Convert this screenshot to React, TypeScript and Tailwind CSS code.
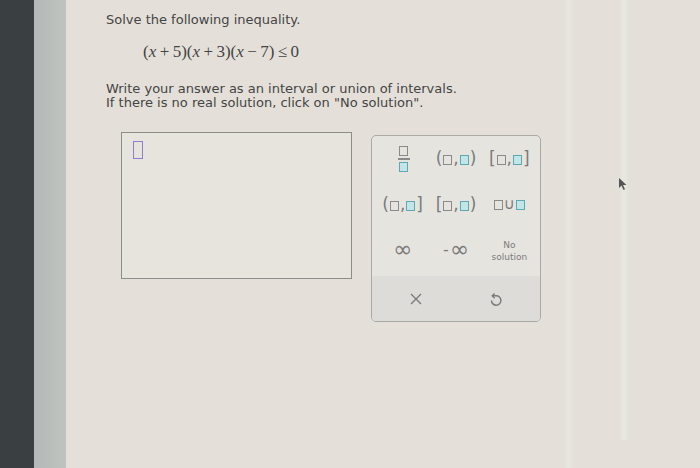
import React from 'react';

const Box = ({ filled }: { filled?: boolean }) => (
  <span
    className={
      filled
        ? 'inline-block w-[9px] h-[10px] border-[1.5px] border-[#5ea8b1] bg-[#c2e5e8]'
        : 'inline-block w-[9px] h-[10px] border-[1.5px] border-[#8a8a8a]'
    }
  />
);

const Interval = ({ open, close }: { open: string; close: string }) => (
  <span className="flex items-center text-[17px] leading-none text-[#7b7b7b]">
    <span className="pb-[2px]">{open}</span>
    <span className="mx-[1px]"><Box /></span>
    <span className="pb-[2px]">,</span>
    <span className="mx-[1px]"><Box filled /></span>
    <span className="pb-[2px]">{close}</span>
  </span>
);

const Key: React.FC<{ children: React.ReactNode }> = ({ children }) => (
  <button className="flex items-center justify-center h-[46px]">{children}</button>
);

const t = '\u2009';

export default function App() {
  return (
    <div
      className="flex w-[700px] h-[468px] overflow-hidden bg-[#e4e0d9]"
      style={{ fontFamily: '"DejaVu Sans", Verdana, sans-serif' }}
    >
      <div className="w-[34px] shrink-0 bg-[#3a3f42]" />
      <div className="w-[32px] shrink-0 bg-gradient-to-r from-[#b3b9b8] to-[#bfc3c0]" />

      <main className="relative flex-1 pl-[40px] pt-[12px] text-[#444]">
        <p className="text-[13px] leading-[16px]">Solve the following inequality.</p>

        <p
          className="mt-[14px] ml-[37px] text-[17px] leading-[20px]"
          style={{ fontFamily: '"Liberation Serif", "Times New Roman", serif' }}
        >
          (<i>x</i>{t}+{t}5)(<i>x</i>{t}+{t}3)(<i>x</i>{t}−{t}7){t}≤{t}0
        </p>

        <p className="mt-[20px] text-[13px] leading-[14px]">
          Write your answer as an interval or union of intervals.
        </p>
        <p className="text-[13px] leading-[14px]">
          If there is no real solution, click on "No solution".
        </p>

        <div className="flex items-start gap-[19px] mt-[22px] ml-[15px]">
          <div className="w-[231px] h-[147px] border border-[#8c8c8a] bg-[#e7e4de] pl-[11px] pt-[8px]">
            <span className="block w-[10px] h-[18px] border-[1.5px] border-[#8a7fd0]" />
          </div>

          <div className="mt-[3px] w-[170px] rounded-[5px] border border-[#a9a9a6] bg-[#e6e4df] overflow-hidden">
            <div className="grid grid-cols-3 px-[4px] pb-[2px]">
              <Key>
                <span className="flex flex-col items-center gap-[2px] ml-[2px]">
                  <Box />
                  <span className="w-[12px] h-[1.5px] bg-[#8a8a8a]" />
                  <Box filled />
                </span>
              </Key>
              <Key><Interval open="(" close=")" /></Key>
              <Key><Interval open="[" close="]" /></Key>

              <Key><Interval open="(" close="]" /></Key>
              <Key><Interval open="[" close=")" /></Key>
              <Key>
                <span className="flex items-center gap-[1px] text-[15px] leading-none text-[#7b7b7b]">
                  <Box />
                  <span className="pb-[1px]">∪</span>
                  <Box filled />
                </span>
              </Key>

              <Key>
                <span className="text-[23px] leading-none text-[#7b7b7b] pb-[3px]">∞</span>
              </Key>
              <Key>
                <span className="flex items-center text-[23px] leading-none text-[#7b7b7b] pb-[3px]">
                  <span className="text-[16px] mr-[1px]">-</span>∞
                </span>
              </Key>
              <Key>
                <span className="text-[9px] leading-[12px] text-[#7b7b7b] text-center">
                  No
                  <br />
                  solution
                </span>
              </Key>
            </div>

            <div className="grid grid-cols-2 h-[45px] bg-[#dddcd8] px-[4px]">
              <button className="flex items-center justify-center">
                <svg width="12" height="12" viewBox="0 0 12 12">
                  <path d="M1 1 L11 11 M11 1 L1 11" stroke="#7b7b7b" strokeWidth="1.4" />
                </svg>
              </button>
              <button className="flex items-center justify-center">
                <svg width="14" height="17" viewBox="0 0 14 17">
                  <path
                    d="M2.5 10.5 A4.7 4.7 0 1 0 7 5.8"
                    fill="none"
                    stroke="#7b7b7b"
                    strokeWidth="1.5"
                  />
                  <path d="M7 5.8 L3.5 5.8" fill="none" stroke="#7b7b7b" strokeWidth="1.5" />
                  <path
                    d="M5.6 3.4 L3.3 5.8 L5.6 8.2"
                    fill="none"
                    stroke="#7b7b7b"
                    strokeWidth="1.5"
                  />
                </svg>
              </button>
            </div>
          </div>
        </div>

        <div className="absolute left-[498px] top-[0px] w-[10px] h-[468px] bg-gradient-to-r from-transparent via-[#ebe9e4] to-transparent opacity-70" />
        <div className="absolute left-[553px] top-[0px] w-[10px] h-[440px] bg-gradient-to-r from-transparent via-[#ecebe7] to-transparent opacity-70" />

        <svg
          className="absolute left-[552px] top-[177px]"
          width="10"
          height="14"
          viewBox="0 0 10 14"
        >
          <path d="M1 1 L1 11 L3.5 8.5 L5.5 13 L7 12.3 L5 8 L8.5 8 Z" fill="#555" />
        </svg>
      </main>
    </div>
  );
}
